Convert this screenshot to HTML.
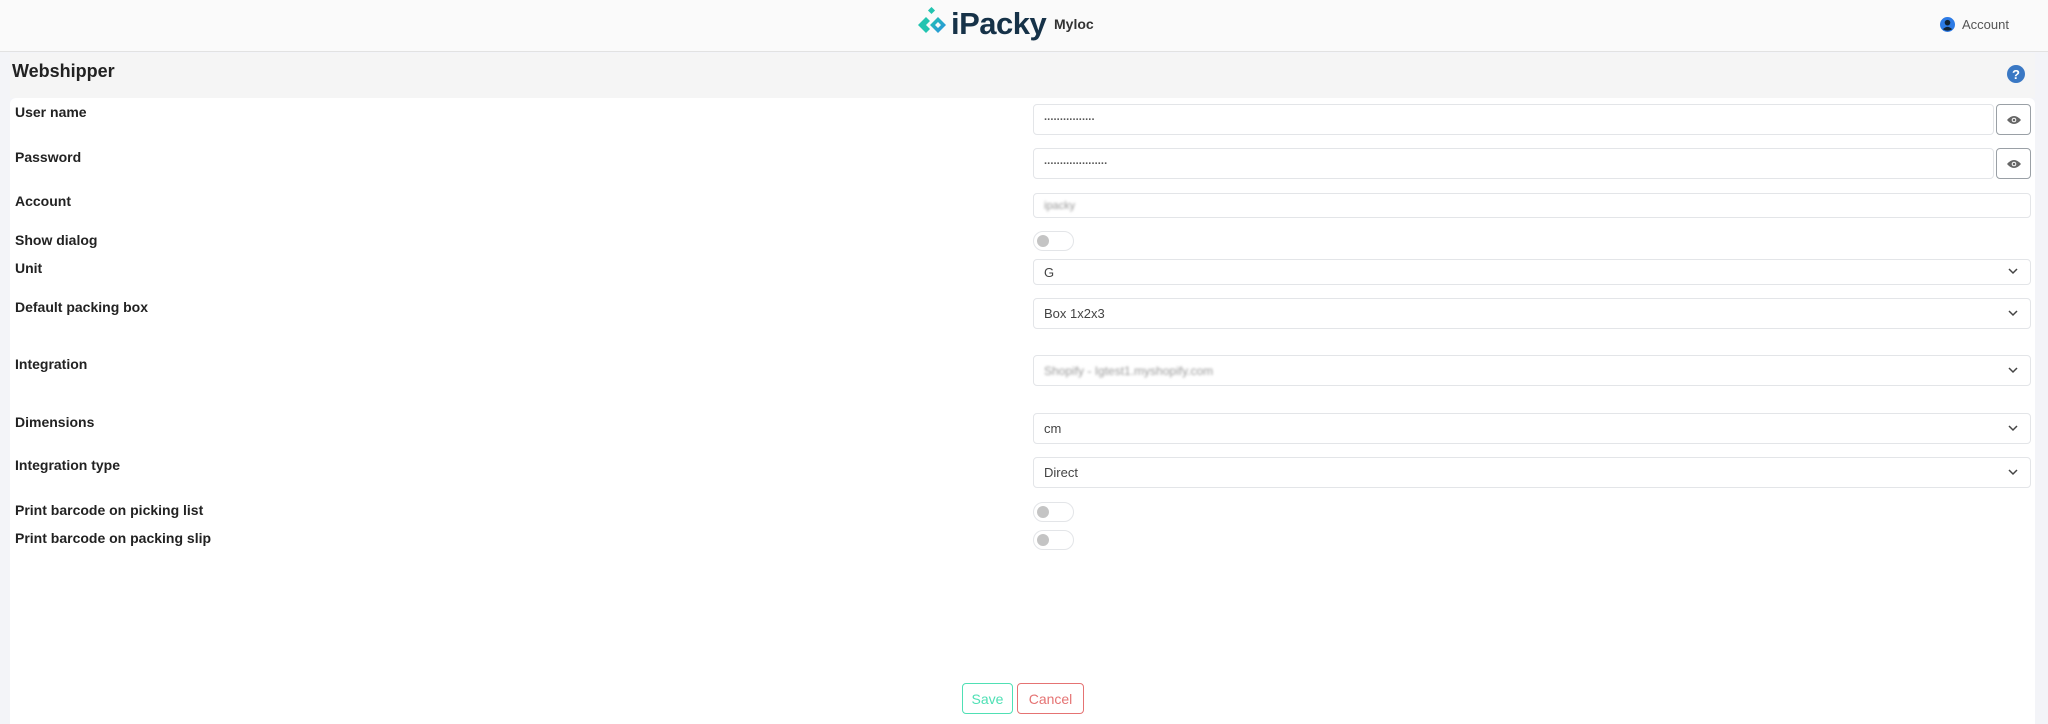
<!DOCTYPE html><html><head><style>
*{box-sizing:border-box;margin:0;padding:0}
body{width:2048px;height:724px;overflow:hidden;background:#f3f4f8;font-family:"Liberation Sans",sans-serif;color:#222;position:relative}
.abs{position:absolute}
.hdr{left:0;top:0;width:2048px;height:52px;background:#fafafa;border-bottom:1px solid #e2e2e2}
.tb{left:10px;top:53px;width:2025px;height:45px;background:#f5f5f5}
.main{left:10px;top:98px;width:2025px;height:626px;background:#fff;border-radius:6px 6px 0 0}
.lbl{left:15px;font-size:14px;font-weight:bold;color:#222}
.in{left:1033px;width:998px;border:1px solid #e3e5e8;border-radius:4px;background:#fff;font-size:13px;color:#444;padding-left:10px;display:flex;align-items:center}
.pw{width:961px}
.dots{font-size:11px;letter-spacing:-0.5px;color:#555;font-weight:bold}
.eye{left:1996px;width:35px;height:31px;border:1px solid #9aa0a6;border-radius:4px;background:#fff;display:flex;align-items:center;justify-content:center}
.tg{left:1033px;width:41px;height:20px;border:1px solid #e3e5e8;border-radius:10px;background:#fff}
.tg:after{content:"";position:absolute;left:3px;top:3px;width:12px;height:12px;border-radius:50%;background:#c4c4c4}
.chev{position:absolute;right:12px;top:50%;margin-top:-4px}
.blur{filter:blur(1.2px);color:#999}
</style></head><body>
<div class="abs hdr"></div>
<svg class="abs" style="left:916px;top:7px" width="32" height="32" viewBox="0 0 32 32">
<defs><linearGradient id="g" x1="0" y1="0" x2="1" y2="1"><stop offset="0" stop-color="#22c4b0"/><stop offset="1" stop-color="#2a8fe0"/></linearGradient></defs>
<rect x="13" y="1" width="5" height="5" fill="#22c4b0" transform="rotate(45 15.5 3.5)"/>
<path d="M2 18 L10 10 L14 14 L10 18 L14 22 L10 26 Z" fill="#22c4b0"/>
<path d="M14 18 L22 10 L30 18 L22 26 Z M22 15 L19 18 L22 21 L25 18 Z" fill="url(#g)" fill-rule="evenodd"/>
</svg>
<div class="abs" style="left:951px;top:6px;font-size:31px;font-weight:bold;color:#163248;letter-spacing:-0.5px">iPacky</div>
<div class="abs" style="left:1054px;top:16px;font-size:14px;font-weight:bold;color:#333">Myloc</div>
<svg class="abs" style="left:1940px;top:17px" width="15" height="15" viewBox="0 0 16 16"><circle cx="8" cy="8" r="8" fill="#2d7be5"/><circle cx="8" cy="6" r="3" fill="#123"/><path d="M3 13 Q8 8 13 13 Q8 16 3 13Z" fill="#123"/></svg>
<div class="abs" style="left:1962px;top:17px;font-size:13px;color:#555">Account</div>
<div class="abs tb"></div>
<div class="abs" style="left:12px;top:61px;font-size:18px;font-weight:bold;color:#222">Webshipper</div>
<svg class="abs" style="left:2007px;top:65px" width="18" height="18" viewBox="0 0 18 18"><circle cx="9" cy="9" r="9" fill="#3a78c4"/><text x="9" y="14" font-size="13" font-weight="bold" fill="#fff" text-anchor="middle" font-family="Liberation Sans">?</text></svg>
<div class="abs main"></div>

<div class="abs lbl" style="top:104px">User name</div>
<div class="abs lbl" style="top:149px">Password</div>
<div class="abs lbl" style="top:193px">Account</div>
<div class="abs lbl" style="top:232px">Show dialog</div>
<div class="abs lbl" style="top:260px">Unit</div>
<div class="abs lbl" style="top:299px">Default packing box</div>
<div class="abs lbl" style="top:356px">Integration</div>
<div class="abs lbl" style="top:414px">Dimensions</div>
<div class="abs lbl" style="top:457px">Integration type</div>
<div class="abs lbl" style="top:502px">Print barcode on picking list</div>
<div class="abs lbl" style="top:530px">Print barcode on packing slip</div>

<div class="abs in pw dots" style="top:104px;height:31px">················</div>
<div class="abs eye" style="top:104px"><svg width="14" height="10" viewBox="0 0 14 10"><path d="M0 5 Q7 -3 14 5 Q7 13 0 5Z" fill="#666"/><circle cx="7" cy="5" r="2.3" fill="#fff"/><circle cx="7" cy="5" r="1.3" fill="#666"/></svg></div>
<div class="abs in pw dots" style="top:148px;height:31px">····················</div>
<div class="abs eye" style="top:148px"><svg width="14" height="10" viewBox="0 0 14 10"><path d="M0 5 Q7 -3 14 5 Q7 13 0 5Z" fill="#666"/><circle cx="7" cy="5" r="2.3" fill="#fff"/><circle cx="7" cy="5" r="1.3" fill="#666"/></svg></div>
<div class="abs in" style="top:193px;height:25px"><span class="blur" style="font-size:11px">ipacky</span></div>
<div class="abs tg" style="top:231px"></div>
<div class="abs in" style="top:259px;height:26px">G<svg class="chev" width="10" height="7" viewBox="0 0 10 7"><path d="M1 1 L5 5 L9 1" stroke="#444" stroke-width="1.5" fill="none"/></svg></div>
<div class="abs in" style="top:298px;height:31px">Box 1x2x3<svg class="chev" width="10" height="7" viewBox="0 0 10 7"><path d="M1 1 L5 5 L9 1" stroke="#444" stroke-width="1.5" fill="none"/></svg></div>
<div class="abs in" style="top:355px;height:31px"><span class="blur" style="font-size:12px">Shopify - Igtest1.myshopify.com</span><svg class="chev" width="10" height="7" viewBox="0 0 10 7"><path d="M1 1 L5 5 L9 1" stroke="#444" stroke-width="1.5" fill="none"/></svg></div>
<div class="abs in" style="top:413px;height:31px">cm<svg class="chev" width="10" height="7" viewBox="0 0 10 7"><path d="M1 1 L5 5 L9 1" stroke="#444" stroke-width="1.5" fill="none"/></svg></div>
<div class="abs in" style="top:457px;height:31px">Direct<svg class="chev" width="10" height="7" viewBox="0 0 10 7"><path d="M1 1 L5 5 L9 1" stroke="#444" stroke-width="1.5" fill="none"/></svg></div>
<div class="abs tg" style="top:502px"></div>
<div class="abs tg" style="top:530px"></div>

<div class="abs" style="left:962px;top:683px;width:51px;height:31px;border:1px solid #4fe0b5;border-radius:4px;color:#4fe0b5;font-size:14px;display:flex;align-items:center;justify-content:center">Save</div>
<div class="abs" style="left:1017px;top:683px;width:67px;height:31px;border:1px solid #e57373;border-radius:4px;color:#e57373;font-size:14px;display:flex;align-items:center;justify-content:center">Cancel</div>
</body></html>
